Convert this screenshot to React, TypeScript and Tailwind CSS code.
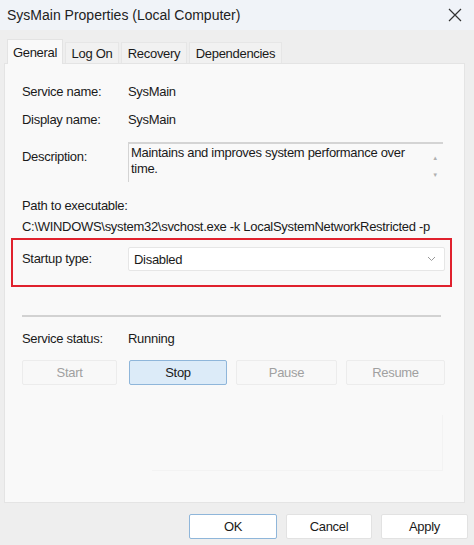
import React from "react";

const font = { fontFamily: '"Liberation Sans", Arial, sans-serif' };

function Tab({ label, active, w }: { label: string; active?: boolean; w: string }) {
  return (
    <div
      className={
        w +
        " " +
        (active
          ? "relative z-10 -mb-px flex h-[25px] items-center justify-center border border-b-0 border-[#e3e3e3] bg-[#f9f9f9] pt-[1px]"
          : "mt-[3px] flex h-[21px] items-center justify-center border border-b-0 border-[#e6e6e6] bg-[#f1f1f1]")
      }
    >
      {label}
    </div>
  );
}

function Row({ label, children }: { label: string; children: React.ReactNode }) {
  return (
    <div className="flex items-center">
      <div className="w-[106px] shrink-0">{label}</div>
      <div>{children}</div>
    </div>
  );
}

function Btn({ label, disabled, primary, w }: { label: string; disabled?: boolean; primary?: boolean; w: string }) {
  return (
    <div
      className={
        "flex h-[25px] items-center justify-center rounded-[2px] border " +
        w +
        " " +
        (primary
          ? "border-[#8fb6da] bg-[#dcebf8] text-[#1a1a1a]"
          : disabled
          ? "border-[#ececec] bg-[#f8f8f8] text-[#a0a0a0]"
          : "border-[#e2e2e2] bg-white text-[#1a1a1a]")
      }
    >
      {label}
    </div>
  );
}

export default function App() {
  return (
    <div
      className="h-[545px] w-[474px] overflow-hidden bg-[#eeeeee] text-[13px] leading-[17px] tracking-[-0.3px] text-[#1a1a1a]"
      style={font}
    >
      <div className="flex h-[30px] items-center justify-between bg-[#f0f3f8] pl-[7px] pr-[10px]">
        <span className="text-[14px] tracking-normal text-[#222]">SysMain Properties (Local Computer)</span>
        <svg width="14" height="14" viewBox="0 0 14 14" className="mr-[2px]">
          <path d="M1 1 L13 13 M13 1 L1 13" stroke="#333" strokeWidth="1.2" />
        </svg>
      </div>
      <div className="flex items-end gap-[2px] pl-[7px] pt-[9px]">
        <Tab label="General" active w="w-[56px]" />
        <Tab label="Log On" w="w-[54px]" />
        <Tab label="Recovery" w="w-[66px]" />
        <Tab label="Dependencies" w="w-[93px]" />
      </div>
      <div className="ml-[4px] h-[440px] w-[461px] border border-[#e4e4e4] bg-[#f9f9f9] pl-[17px] pt-[19px]">
        <div className="flex flex-col gap-[11px]">
          <Row label="Service name:">SysMain</Row>
          <Row label="Display name:">SysMain</Row>
        </div>
        <div className="mt-[14px] flex items-start">
          <div className="w-[106px] shrink-0 pt-[6px]">Description:</div>
          <div className="flex h-[40px] w-[315px] border-t-2 border-l border-[#d4d4d4] bg-[#f9f9f9]">
            <div className="flex-1 pl-[2px] pt-[1px] leading-[16px]">
              Maintains and improves system performance over time.
            </div>
            <div className="flex w-[16px] flex-col items-center justify-between py-[6px] text-[6px] text-[#b0b0b0]">
              <span>▲</span>
              <span>▼</span>
            </div>
          </div>
        </div>
        <div className="mt-[15px]">Path to executable:</div>
        <div className="mt-[4px] whitespace-nowrap">C:\WINDOWS\system32\svchost.exe -k LocalSystemNetworkRestricted -p</div>
        <div className="-ml-[11px] mt-[3px] flex h-[49px] w-[441px] items-start border-2 border-[#e0212d] pl-[9px] pt-[7px]">
          <div className="w-[106px] shrink-0 pt-[3px]">Startup type:</div>
          <div className="flex h-[24px] w-[317px] items-center justify-between rounded-[2px] border border-[#e6e6e6] bg-white pl-[5px] pr-[8px]">
            <span>Disabled</span>
            <svg width="9" height="6" viewBox="0 0 9 6">
              <path d="M1 1 L4.5 4.5 L8 1" stroke="#999" strokeWidth="1" fill="none" />
            </svg>
          </div>
        </div>
        <div className="mt-[28px] h-[2px] w-[419px] bg-[#d2d2d2]" />
        <div className="mt-[13px]">
          <Row label="Service status:">Running</Row>
        </div>
        <div className="mt-[13px] flex">
          <Btn label="Start" disabled w="w-[95px]" />
          <Btn label="Stop" primary w="ml-[12px] w-[98px]" />
          <Btn label="Pause" disabled w="ml-[9px] w-[101px]" />
          <Btn label="Resume" disabled w="ml-[9px] w-[99px]" />
        </div>
        <div className="ml-[130px] mt-[30px] h-[56px] w-[291px] border-r border-b border-[#f3f3f3]" />
      </div>
      <div className="mr-[6px] mt-[11px] flex justify-end gap-[9px]">
        <Btn label="OK" primary w="w-[88px] !bg-white" />
        <Btn label="Cancel" w="w-[86px]" />
        <Btn label="Apply" w="w-[87px]" />
      </div>
    </div>
  );
}
